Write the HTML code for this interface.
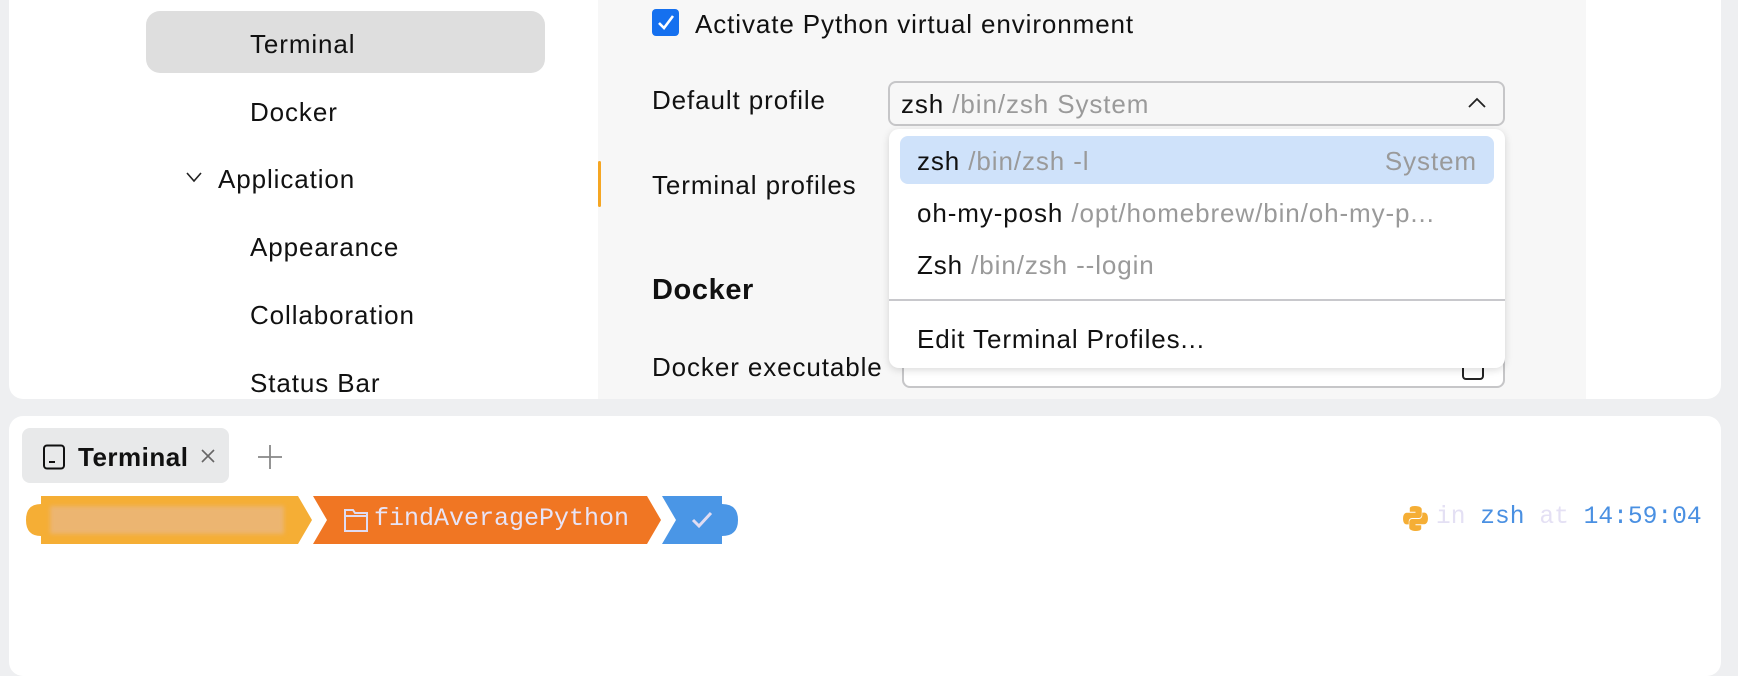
<!DOCTYPE html>
<html><head><meta charset="utf-8"><style>
*{margin:0;padding:0;box-sizing:border-box}
body{width:1738px;height:644px;background:#eeeff1;position:relative;overflow:hidden;font-family:"Liberation Sans",sans-serif;color:#111}
.a{position:absolute;white-space:nowrap}
.t{font-size:26px;line-height:30px;letter-spacing:0.9px}
.g{color:#9a9a9a}
.m{font-family:"Liberation Mono",monospace;letter-spacing:0}
</style></head><body>
<div class="a" style="left:9px;top:-20px;width:1712px;height:419px;background:#fff;border-radius:14px;overflow:hidden">
  <div class="a" style="left:589px;top:0;width:988px;height:419px;background:#f7f7f7"></div>
</div>
<div class="a" style="left:146px;top:11px;width:399px;height:62px;background:#dedede;border-radius:14px"></div>
<div class="a t" style="left:250px;top:29px">Terminal</div>
<div class="a t" style="left:250px;top:97px">Docker</div>
<svg class="a" style="left:186px;top:172px" width="16" height="11"><path d="M1 1 L8 9 L15 1" fill="none" stroke="#222" stroke-width="1.6"/></svg>
<div class="a t" style="left:218px;top:164px">Application</div>
<div class="a t" style="left:250px;top:232px">Appearance</div>
<div class="a t" style="left:250px;top:300px">Collaboration</div>
<div class="a t" style="left:250px;top:368px">Status Bar</div>
<div class="a" style="left:598px;top:161px;width:3px;height:46px;background:#f5a623;border-radius:2px"></div>

<div class="a" style="left:652px;top:9px;width:27px;height:27px;background:#1570ef;border-radius:4px"></div>
<svg class="a" style="left:652px;top:9px" width="27" height="27"><path d="M7 14 L12 19 L21 7" fill="none" stroke="#fff" stroke-width="2.6"/></svg>
<div class="a t" style="left:695px;top:9px">Activate Python virtual environment</div>
<div class="a t" style="left:652px;top:85px">Default profile</div>
<div class="a" style="left:888px;top:81px;width:617px;height:45px;border:2px solid #c6c6c8;border-radius:8px;background:#f7f7f7"></div>
<div class="a t" style="left:901px;top:89px">zsh <span class="g">/bin/zsh System</span></div>
<svg class="a" style="left:1468px;top:97px" width="18" height="12"><path d="M1 10 L9 2 L17 10" fill="none" stroke="#222" stroke-width="1.8"/></svg>
<div class="a t" style="left:652px;top:170px">Terminal profiles</div>
<div class="a" style="left:652px;top:273px;font-size:29px;font-weight:bold;line-height:34px;letter-spacing:0.6px">Docker</div>
<div class="a t" style="left:652px;top:352px">Docker executable</div>
<div class="a" style="left:902px;top:349px;width:603px;height:39px;border:2px solid #c6c6c8;border-radius:8px;background:#fff"></div>
<div class="a" style="left:1462px;top:360px;width:22px;height:20px;border:2px solid #222;border-radius:4px"></div>

<div class="a" style="left:889px;top:129px;width:616px;height:239px;background:#fff;border-radius:10px;box-shadow:0 2px 8px rgba(0,0,0,.15)"></div>
<div class="a" style="left:900px;top:136px;width:594px;height:48px;background:#cfe2fa;border-radius:8px"></div>
<div class="a t" style="left:917px;top:146px">zsh <span class="g">/bin/zsh -l</span></div>
<div class="a t g" style="left:1363px;top:146px;width:114px;text-align:right">System</div>
<div class="a t" style="left:917px;top:198px">oh-my-posh <span class="g">/opt/homebrew/bin/oh-my-p...</span></div>
<div class="a t" style="left:917px;top:250px">Zsh <span class="g">/bin/zsh --login</span></div>
<div class="a" style="left:889px;top:299px;width:616px;height:2px;background:#c8c8cc"></div>
<div class="a t" style="left:917px;top:324px">Edit Terminal Profiles...</div>

<div class="a" style="left:9px;top:416px;width:1712px;height:260px;background:#fff;border-radius:14px"></div>
<div class="a" style="left:22px;top:428px;width:207px;height:55px;background:#e8e9ea;border-radius:8px"></div>
<svg class="a" style="left:42px;top:444px" width="24" height="26"><rect x="2" y="1.5" width="20" height="23" rx="3" fill="none" stroke="#111" stroke-width="2"/><path d="M7 18 H13" stroke="#111" stroke-width="2"/></svg>
<div class="a" style="left:78px;top:442px;font-size:26px;font-weight:bold;line-height:30px;letter-spacing:0.5px">Terminal</div>
<svg class="a" style="left:200px;top:448px" width="16" height="16"><path d="M2 2 L14 14 M14 2 L2 14" stroke="#666" stroke-width="1.6"/></svg>
<svg class="a" style="left:257px;top:444px" width="26" height="26"><path d="M13 1 V25 M1 13 H25" stroke="#888" stroke-width="1.8"/></svg>

<svg class="a" style="left:0;top:490px" width="760" height="60">
<path d="M41 6 H298 L312 30 L298 54 H41 V46 Q26 46 26 30 Q26 14 41 14 Z" fill="#f5ae35"/>
<path d="M313 6 H647 L661 30 L647 54 H313 L327 30 Z" fill="#f07623"/>
<path d="M662 6 H722 V14 Q738 14 738 30 Q738 46 722 46 V54 H662 L676 30 Z" fill="#4a96e6"/>
</svg>
<div class="a" style="left:50px;top:506px;width:234px;height:28px;background:#ecb571;filter:blur(2px)"></div>
<svg class="a" style="left:343px;top:507px" width="26" height="26"><path d="M2 3 H10 L12 6 H24 V24 H2 Z M2 9 H24" fill="none" stroke="#e0dcf2" stroke-width="2"/></svg>
<div class="a m" style="left:374px;top:504px;font-size:25px;line-height:30px;color:#e8e4f6">findAveragePython</div>
<svg class="a" style="left:689px;top:508px" width="26" height="24"><path d="M4 12 L10 18 L22 5" fill="none" stroke="#e0dcf2" stroke-width="3"/></svg>

<svg class="a" style="left:1402px;top:505px" width="27" height="27" viewBox="0 0 26 26"><path d="M12.5 1 C7 1 7.5 3.5 7.5 3.5 V6.5 H13 V7.5 H5 C5 7.5 1 7 1 13 C1 19 4.5 18.7 4.5 18.7 H6.5 V16 C6.5 16 6.4 12.5 10 12.5 H16 C16 12.5 19 12.5 19 9.5 V4.5 C19 4.5 19.5 1 12.5 1 Z M13.5 25 C19 25 18.5 22.5 18.5 22.5 V19.5 H13 V18.5 H21 C21 18.5 25 19 25 13 C25 7 21.5 7.3 21.5 7.3 H19.5 V10 C19.5 10 19.6 13.5 16 13.5 H10 C10 13.5 7 13.5 7 16.5 V21.5 C7 21.5 6.5 25 13.5 25 Z" fill="#f5ae35"/></svg>
<div class="a m" style="left:1436px;top:503px;font-size:24.6px;line-height:30px;color:#4a90e2"><span style="color:#e4e0f4">in</span> zsh <span style="color:#e4e0f4">at</span> 14:59:04</div>
</body></html>
